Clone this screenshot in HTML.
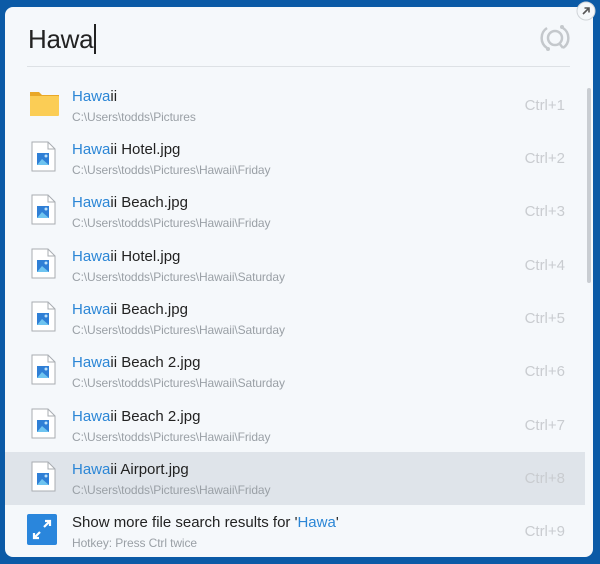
<!DOCTYPE html>
<html><head><style>
*{margin:0;padding:0;box-sizing:border-box}
body{width:600px;height:564px;background:#0b5aa6;font-family:"Liberation Sans",sans-serif;position:relative;overflow:hidden}
.panel{position:absolute;left:5px;top:7px;width:588px;height:550px;background:#f5f8fb;border-radius:8px;overflow:hidden}
.q{position:absolute;left:23px;top:17px;font-size:26px;color:#222;letter-spacing:-0.3px}
.caret{display:inline-block;width:1.5px;height:30px;background:#222;vertical-align:-6px;margin-left:1px}
.sep{position:absolute;left:22px;top:59px;width:543px;height:1px;background:#dde1e5}
.row{position:absolute;left:0;width:580px;height:53px}
.row.sel{background:#dfe4ea}
.t{position:absolute;left:67px;top:9px;font-size:15px;color:#222}
.t b{font-weight:normal;color:#2b86d6}
.s{position:absolute;left:67px;top:31px;font-size:12px;color:#9aa0a6;letter-spacing:-0.1px}
.k{position:absolute;right:20px;top:18px;font-size:15px;color:#c9ccd0}
.ic{position:absolute;left:25px;top:8px}
.sb{position:absolute;left:582px;top:81px;width:4px;height:195px;background:#c9cdd2;border-radius:2px}
</style></head><body>
<div class="panel">
<div class="q">Hawa<span class="caret"></span></div>
<svg style="position:absolute;left:533px;top:14px" width="34" height="34" viewBox="0 0 34 34" fill="none" stroke="#c4c8cc" stroke-width="2.5"><circle cx="17" cy="17" r="7"/><path d="M21 22l4 5"/><path d="M9 27a12 12 0 0 1 0-20" /><path d="M25 7a12 12 0 0 1 0 20"/><circle cx="24" cy="6" r="2" fill="#c4c8cc" stroke="none"/><circle cx="10" cy="28" r="2" fill="#c4c8cc" stroke="none"/></svg>
<div class="sep"></div>
<div class="sb"></div>

<div class="row" style="top:72px"><svg class="ic" width="32" height="32" viewBox="0 0 32 32"><path d="M-2 5h11l3 3h17v4h-31z" fill="#e9a828"/><rect x="-2" y="9" width="31" height="20" rx="1" fill="#fbcd55"/></svg><div class="t"><b>Hawa</b>ii</div><div class="s">C:\Users\todds\Pictures</div><div class="k">Ctrl+1</div></div>

<div class="row" style="top:125px"><svg class="ic" width="32" height="34" viewBox="0 0 32 34"><path d="M2 2h16l7 7v22h-23z" fill="#fff" stroke="#a9adb2"/><path d="M18 2v7h7" fill="none" stroke="#a9adb2"/><rect x="7" y="13" width="12" height="12" fill="#2f7fd6"/><path d="M7 25l5-6 7 6z" fill="#6ec4f0"/><circle cx="16" cy="16" r="1.5" fill="#bfe3fa"/></svg><div class="t"><b>Hawa</b>ii Hotel.jpg</div><div class="s">C:\Users\todds\Pictures\Hawaii\Friday</div><div class="k">Ctrl+2</div></div>

<div class="row" style="top:178px"><svg class="ic" width="32" height="34" viewBox="0 0 32 34"><path d="M2 2h16l7 7v22h-23z" fill="#fff" stroke="#a9adb2"/><path d="M18 2v7h7" fill="none" stroke="#a9adb2"/><rect x="7" y="13" width="12" height="12" fill="#2f7fd6"/><path d="M7 25l5-6 7 6z" fill="#6ec4f0"/><circle cx="16" cy="16" r="1.5" fill="#bfe3fa"/></svg><div class="t"><b>Hawa</b>ii Beach.jpg</div><div class="s">C:\Users\todds\Pictures\Hawaii\Friday</div><div class="k">Ctrl+3</div></div>

<div class="row" style="top:232px"><svg class="ic" width="32" height="34" viewBox="0 0 32 34"><path d="M2 2h16l7 7v22h-23z" fill="#fff" stroke="#a9adb2"/><path d="M18 2v7h7" fill="none" stroke="#a9adb2"/><rect x="7" y="13" width="12" height="12" fill="#2f7fd6"/><path d="M7 25l5-6 7 6z" fill="#6ec4f0"/><circle cx="16" cy="16" r="1.5" fill="#bfe3fa"/></svg><div class="t"><b>Hawa</b>ii Hotel.jpg</div><div class="s">C:\Users\todds\Pictures\Hawaii\Saturday</div><div class="k">Ctrl+4</div></div>

<div class="row" style="top:285px"><svg class="ic" width="32" height="34" viewBox="0 0 32 34"><path d="M2 2h16l7 7v22h-23z" fill="#fff" stroke="#a9adb2"/><path d="M18 2v7h7" fill="none" stroke="#a9adb2"/><rect x="7" y="13" width="12" height="12" fill="#2f7fd6"/><path d="M7 25l5-6 7 6z" fill="#6ec4f0"/><circle cx="16" cy="16" r="1.5" fill="#bfe3fa"/></svg><div class="t"><b>Hawa</b>ii Beach.jpg</div><div class="s">C:\Users\todds\Pictures\Hawaii\Saturday</div><div class="k">Ctrl+5</div></div>

<div class="row" style="top:338px"><svg class="ic" width="32" height="34" viewBox="0 0 32 34"><path d="M2 2h16l7 7v22h-23z" fill="#fff" stroke="#a9adb2"/><path d="M18 2v7h7" fill="none" stroke="#a9adb2"/><rect x="7" y="13" width="12" height="12" fill="#2f7fd6"/><path d="M7 25l5-6 7 6z" fill="#6ec4f0"/><circle cx="16" cy="16" r="1.5" fill="#bfe3fa"/></svg><div class="t"><b>Hawa</b>ii Beach 2.jpg</div><div class="s">C:\Users\todds\Pictures\Hawaii\Saturday</div><div class="k">Ctrl+6</div></div>

<div class="row" style="top:392px"><svg class="ic" width="32" height="34" viewBox="0 0 32 34"><path d="M2 2h16l7 7v22h-23z" fill="#fff" stroke="#a9adb2"/><path d="M18 2v7h7" fill="none" stroke="#a9adb2"/><rect x="7" y="13" width="12" height="12" fill="#2f7fd6"/><path d="M7 25l5-6 7 6z" fill="#6ec4f0"/><circle cx="16" cy="16" r="1.5" fill="#bfe3fa"/></svg><div class="t"><b>Hawa</b>ii Beach 2.jpg</div><div class="s">C:\Users\todds\Pictures\Hawaii\Friday</div><div class="k">Ctrl+7</div></div>

<div class="row sel" style="top:445px"><svg class="ic" width="32" height="34" viewBox="0 0 32 34"><path d="M2 2h16l7 7v22h-23z" fill="#fff" stroke="#a9adb2"/><path d="M18 2v7h7" fill="none" stroke="#a9adb2"/><rect x="7" y="13" width="12" height="12" fill="#2f7fd6"/><path d="M7 25l5-6 7 6z" fill="#6ec4f0"/><circle cx="16" cy="16" r="1.5" fill="#bfe3fa"/></svg><div class="t"><b>Hawa</b>ii Airport.jpg</div><div class="s">C:\Users\todds\Pictures\Hawaii\Friday</div><div class="k">Ctrl+8</div></div>

<div class="row" style="top:498px"><svg class="ic" style="left:22px;top:9px" width="32" height="32" viewBox="0 0 32 32"><rect x="0" y="0" width="30" height="31" rx="2" fill="#2a86dc"/><path d="M17 13l6-6M18 7h5v5M13 18l-6 6M7 19v5h5" stroke="#fff" stroke-width="2.2" fill="none"/></svg><div class="t">Show more file search results for '<b>Hawa</b>'</div><div class="s">Hotkey: Press Ctrl twice</div><div class="k">Ctrl+9</div></div>
</div>
<svg style="position:absolute;left:576px;top:1px" width="20" height="20" viewBox="0 0 20 20"><circle cx="10" cy="10" r="9" fill="#f5f8fb" stroke="#d0d4d8"/><path d="M7 13l6-6M8.5 7h4.5v4.5" stroke="#555" stroke-width="1.6" fill="none"/></svg>
</body></html>
